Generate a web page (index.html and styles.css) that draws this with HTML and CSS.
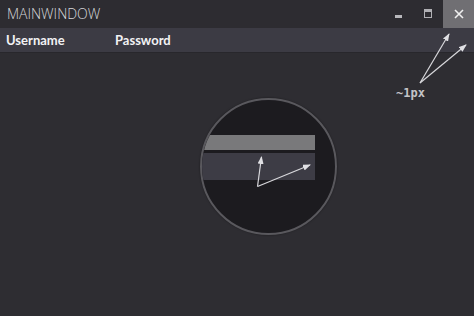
FILE: index.html
```html
<!DOCTYPE html>
<html>
<head>
<meta charset="utf-8">
<link rel="stylesheet" href="styles.css">
</head>
<body>
<div class="window">
  <div class="titlebar">
    <div class="title">MAINWINDOW</div>
    <div class="controls">
      <div class="btn"><span class="min"></span></div>
      <div class="btn"><span class="max"></span></div>
      <div class="btn close">
        <svg width="10" height="10" viewBox="0 0 10 10"><path d="M1 1L9 9M9 1L1 9" stroke="#f0f0f0" stroke-width="1.6"/></svg>
      </div>
    </div>
  </div>
  <div class="header">
    <div class="col user">Username</div>
    <div class="col pass">Password</div>
  </div>
  <div class="content">
    <div class="lens">
      <div class="lens-bar light"></div>
      <div class="lens-bar dark"></div>
    </div>
    <div class="note">~1px</div>
    <svg class="arrows" width="474" height="316" viewBox="0 0 474 316">
      <defs>
        <marker id="ah" markerWidth="8" markerHeight="6" refX="7" refY="3" orient="auto" markerUnits="userSpaceOnUse">
          <path d="M0 0L8 3L0 6z" fill="#e0e0e4"/>
        </marker>
      </defs>
      <g stroke="#d8d8dc" stroke-width="1.2" fill="none">
        <line x1="420" y1="83" x2="449" y2="34" marker-end="url(#ah)"/>
        <line x1="420" y1="83" x2="466" y2="45" marker-end="url(#ah)"/>
        <line x1="257.5" y1="186.5" x2="261.5" y2="157" marker-end="url(#ah)"/>
        <line x1="257.5" y1="186.5" x2="310" y2="165" marker-end="url(#ah)"/>
      </g>
    </svg>
  </div>
</div>
</body>
</html>
```

FILE: styles.css
```css
html, body {
  margin: 0;
  padding: 0;
  width: 474px;
  height: 316px;
  overflow: hidden;
  background: #2e2d32;
}
.window {
  position: relative;
  width: 474px;
  height: 316px;
  display: flex;
  flex-direction: column;
  font-family: "Open Sans", "Noto Sans", sans-serif;
}
.titlebar {
  height: 28px;
  display: flex;
  align-items: stretch;
  justify-content: space-between;
  background: #2d2c31;
}
.title {
  padding-left: 7px;
  font-size: 14px;
  font-weight: 300;
  color: #d6d6da;
  line-height: 27px;
}
.controls {
  display: flex;
}
.btn {
  width: 30px;
  display: flex;
  align-items: center;
  justify-content: center;
}
.btn.close {
  width: 31px;
  background: #706f73;
}
.min {
  display: block;
  width: 7px;
  height: 3px;
  margin-top: 5px;
  background: #b8b8bc;
}
.max {
  display: block;
  width: 6px;
  height: 5px;
  border: 1px solid #b0b0b4;
  border-top-width: 3px;
  margin-top: -1px;
}
.header {
  height: 24px;
  display: flex;
  align-items: center;
  background: #3c3b44;
  border-bottom: 1px solid #28272c;
}
.col {
  font-family: Lato, "Open Sans", sans-serif;
  font-size: 13px;
  font-weight: 700;
  color: #f2f2f4;
}
.user {
  width: 109px;
  padding-left: 6px;
}
.content {
  flex: 1;
}
.lens {
  position: absolute;
  left: 200px;
  top: 98px;
  width: 133px;
  height: 133px;
  border-radius: 50%;
  border: 2px solid #59585d;
  background: #1c1b1f;
  overflow: hidden;
  display: flex;
  flex-direction: column;
  box-shadow: 0 0 2px rgba(0,0,0,0.5);
}
.lens-bar {
  width: 113px;
  flex: none;
}
.lens-bar.light {
  margin-top: 35px;
  height: 15px;
  background: #79797b;
}
.lens-bar.dark {
  margin-top: 3px;
  height: 27px;
  background: #3d3c45;
}
.note {
  position: absolute;
  left: 396px;
  top: 86px;
  font-family: "DejaVu Sans Mono", monospace;
  font-weight: 700;
  font-size: 12px;
  color: #c4c4c8;
}
.arrows {
  position: absolute;
  left: 0;
  top: 0;
}
```
